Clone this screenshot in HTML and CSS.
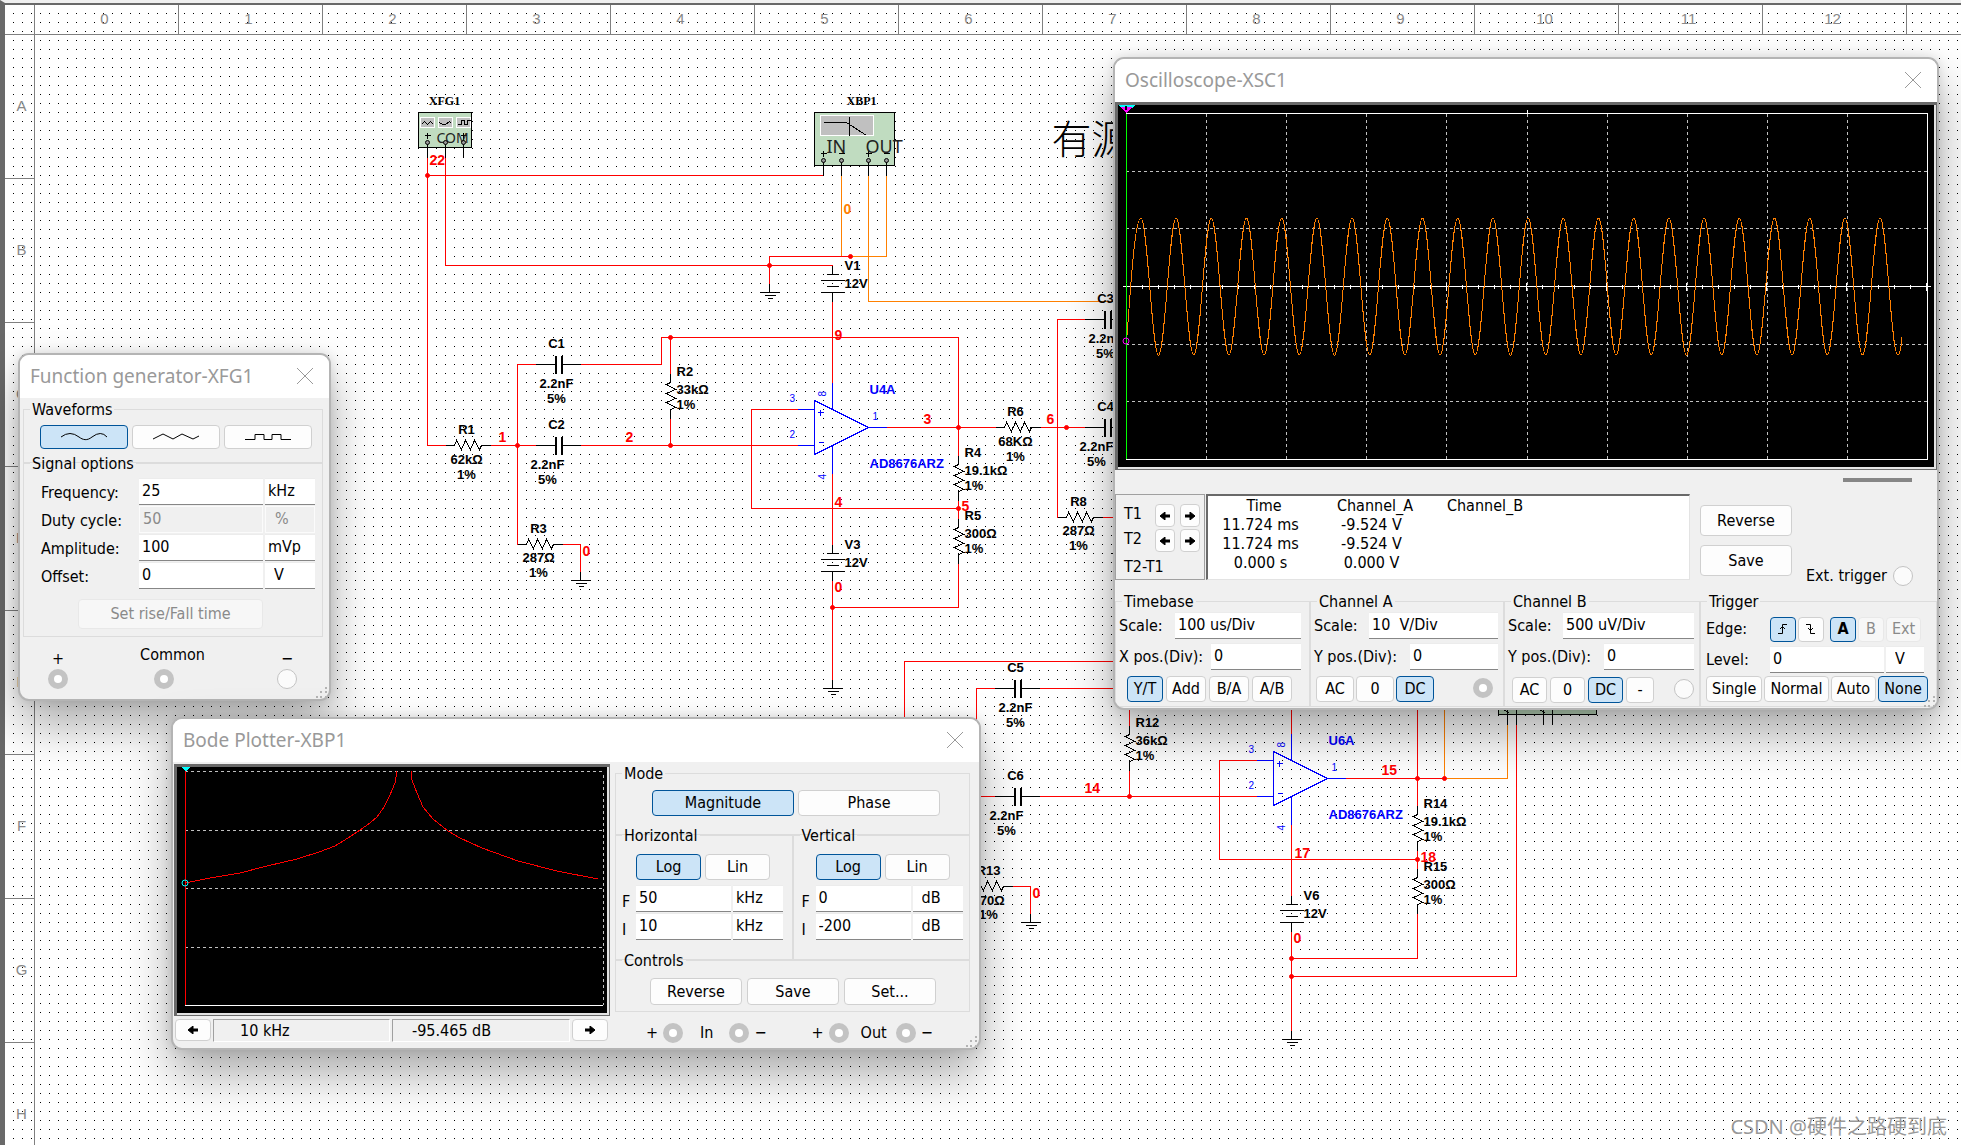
FILE: index.html
```html
<!DOCTYPE html>
<html lang="en">
<head>
<meta charset="utf-8">
<title>Schematic</title>
<link rel="stylesheet" href="styles.css">
</head>
<body>
<main class="desktop">
  <svg class="schematic" role="img" aria-label="Band-pass filter schematic">
    <defs>
      <pattern id="dots" x="4" y="4" width="9" height="9" patternUnits="userSpaceOnUse"><rect width="1" height="1" fill="#000"/></pattern>
      <path id="res-h" d="M0 0h9l2-5 5 9 4-9 5 9 4-9 5 9 2-4h9"/>
      <path id="res-v" d="M0 0v9l-4 2 9 5-9 4 9 5-9 4 9 5-5 2v9"/>
      <g id="cap"><path d="M0 0h19M26 0h19"/><path class="plate" d="M20-9v18M26-9v18"/></g>
      <path id="bat" d="M0 0v9M-6 9h12M-12 15h24M-6 21h12M-12 27h24M0 27v9"/>
      <path id="gnd" d="M0 0v9M-9 9h19M-5 12h11M-2 15h5"/>
      <g id="amp">
        <path d="M0-27V27L54 0zM-17-18H0M-17 18H0M54 0h18M18-45v27M18 18v28M3-15h6M6-18v6M4 15h5"/>
        <text x="-25" y="-26">3</text><text x="-25" y="10">2</text><text x="58" y="-8">1</text>
        <text transform="translate(11 -31) rotate(-90)">8</text><text transform="translate(11 52) rotate(-90)">4</text>
      </g>
      <circle id="dot" r="2"/>
      <circle id="pin" r="2"/>
    </defs>
    <rect width="100%" height="100%" fill="url(#dots)"/>

    <g transform="translate(.5 .5)">
      <g class="wire orange">
        <path d="M841 175V256M886 175V256H850M868 175V301H1130M1444 700V778H1507V724"/>
      </g>
      <g class="wire red">
        <path d="M427 157V445H445M427 175H823M445 157V265H832M850 256H769V283M832 301V382"/>
        <path d="M490 445H535M580 445H797M517 445V364H536M580 364H661V337H958V455M517 445V544M562 544H580V571M670 337V373M670 418V445"/>
        <path d="M797 409H751V508H958M958 500V518M832 473V544M832 580V679M958 563V607H832M886 427H995M1040 427H1084M1084 319H1057V517M1102 517H1130"/>
        <path d="M904 730V661H1130M994 688H976V796H994M1039 688H1130M1039 796H1256M1129 700V725M1129 770V796M1012 886H1030V913"/>
        <path d="M1291 700V733M1256 760H1219V859H1417M1345 778H1444M1417 700V805M1417 850V868M1417 913V958H1291M1516 724V976H1291M1291 823V895M1291 931V1030"/>
      </g>
      <g class="junction">
        <use href="#dot" x="427" y="175"/><use href="#dot" x="769" y="265"/><use href="#dot" x="850" y="256"/><use href="#dot" x="517" y="445"/>
        <use href="#dot" x="670" y="337"/><use href="#dot" x="670" y="445"/><use href="#dot" x="958" y="427"/><use href="#dot" x="958" y="508"/>
        <use href="#dot" x="832" y="607"/><use href="#dot" x="1066" y="427"/><use href="#dot" x="1129" y="796"/><use href="#dot" x="1417" y="778"/>
        <use href="#dot" x="1444" y="778"/><use href="#dot" x="1417" y="859"/><use href="#dot" x="1291" y="958"/><use href="#dot" x="1291" y="976"/>
      </g>
      <g class="part">
        <use href="#res-h" x="445" y="445"/><use href="#res-h" x="517" y="544"/><use href="#res-h" x="995" y="427"/><use href="#res-h" x="1057" y="517"/><use href="#res-h" x="967" y="886"/>
        <use href="#res-v" x="670" y="373"/><use href="#res-v" x="958" y="455"/><use href="#res-v" x="958" y="518"/><use href="#res-v" x="1129" y="725"/><use href="#res-v" x="1417" y="805"/><use href="#res-v" x="1417" y="868"/>
        <use href="#cap" x="535" y="364"/><use href="#cap" x="535" y="445"/><use href="#cap" x="1084" y="319"/><use href="#cap" x="1084" y="427"/><use href="#cap" x="994" y="688"/><use href="#cap" x="994" y="796"/>
        <use href="#bat" x="832" y="265"/><use href="#bat" x="832" y="544"/><use href="#bat" x="1291" y="895"/>
        <use href="#gnd" x="769" y="283"/><use href="#gnd" x="580" y="571"/><use href="#gnd" x="832" y="679"/><use href="#gnd" x="1030" y="913"/><use href="#gnd" x="1291" y="1030"/><use href="#gnd" x="1120" y="544"/>
      </g>
      <g class="amp"><use href="#amp" x="814" y="427"/><use href="#amp" x="1273" y="778"/></g>

      <g class="device">
        <rect class="case" x="418" y="112" width="53" height="35"/>
        <path class="screen" d="M420 117h14v10h-14zM438 117h14v10h-14zM456 117h14v10h-14z"/>
        <path d="M421 124l3-3 3 3 3-3 3 3M439 122l3 2 3 0 4-3 2 2M457 124h4v-4h3v4h3v-4h3M427 132v6M424 135h6M427 142V157M445 142V157M463 132V157M460 135h6"/>
        <text class="small-face" x="436" y="142">COM</text>
        <use href="#pin" x="427" y="142"/><use href="#pin" x="445" y="142"/><use href="#pin" x="463" y="142"/>
        <rect class="case" x="814" y="112" width="80" height="53"/>
        <path class="screen" d="M820 115h53v20h-53z"/>
        <path d="M823 122h23l20 13M849 116v19M820 153h6M823 150v6M838 153h6M865 153h6M868 150v6M883 153h6M823 160V175M841 160V175M868 160V175M886 160V175"/>
        <text class="big-face" x="826" y="152">IN</text><text class="big-face" x="865" y="152">OUT</text>
        <use href="#pin" x="823" y="160"/><use href="#pin" x="841" y="160"/><use href="#pin" x="868" y="160"/><use href="#pin" x="886" y="160"/>
        <rect class="case" x="1498" y="660" width="98" height="54"/>
        <path d="M1507 708V724M1516 708V724M1543 708V724M1552 708V724M1503 709l6 4M1539 709l6 4"/>
      </g>

      <g class="name"><text x="444" y="104">XFG1</text><text x="861" y="104">XBP1</text></g>
      <g class="label mid">
        <text x="556" y="347">C1</text><text x="556" y="387">2.2nF</text><text x="556" y="402">5%</text>
        <text x="556" y="428">C2</text><text x="547" y="468">2.2nF</text><text x="547" y="483">5%</text>
        <text x="466" y="433">R1</text><text x="466" y="463">62kΩ</text><text x="466" y="478">1%</text>
        <text x="538" y="532">R3</text><text x="538" y="561">287Ω</text><text x="538" y="576">1%</text>
        <text x="1015" y="415">R6</text><text x="1015" y="445">68KΩ</text><text x="1015" y="460">1%</text>
        <text x="1078" y="505">R8</text><text x="1078" y="534">287Ω</text><text x="1078" y="549">1%</text>
        <text x="1015" y="671">C5</text><text x="1015" y="711">2.2nF</text><text x="1015" y="726">5%</text>
        <text x="1015" y="779">C6</text><text x="1006" y="819">2.2nF</text><text x="1006" y="834">5%</text>
        <text x="988" y="874">R13</text><text x="988" y="904">270Ω</text><text x="988" y="918">1%</text>
        <text x="1105" y="302">C3</text><text x="1105" y="342">2.2nF</text><text x="1105" y="357">5%</text>
        <text x="1105" y="410">C4</text><text x="1096" y="450">2.2nF</text><text x="1096" y="465">5%</text>
      </g>
      <g class="label">
        <text x="844" y="269">V1</text><text x="844" y="287">12V</text><text x="844" y="548">V3</text><text x="844" y="566">12V</text><text x="1303" y="899">V6</text><text x="1303" y="917">12V</text>
        <text x="676" y="375">R2</text><text x="676" y="393">33kΩ</text><text x="676" y="408">1%</text>
        <text x="964" y="456">R4</text><text x="964" y="474">19.1kΩ</text><text x="964" y="489">1%</text>
        <text x="964" y="519">R5</text><text x="964" y="537">300Ω</text><text x="964" y="552">1%</text>
        <text x="1135" y="726">R12</text><text x="1135" y="744">36kΩ</text><text x="1135" y="759">1%</text>
        <text x="1423" y="807">R14</text><text x="1423" y="825">19.1kΩ</text><text x="1423" y="840">1%</text>
        <text x="1423" y="870">R15</text><text x="1423" y="888">300Ω</text><text x="1423" y="903">1%</text>
      </g>
      <g class="label blue"><text x="869" y="393">U4A</text><text x="869" y="467">AD8676ARZ</text><text x="1328" y="744">U6A</text><text x="1328" y="818">AD8676ARZ</text></g>
      <g class="net">
        <text x="429" y="164">22</text><text x="498" y="441">1</text><text x="625" y="441">2</text><text x="582" y="555">0</text><text x="834" y="339">9</text>
        <text x="923" y="423">3</text><text x="834" y="506">4</text><text x="961" y="510">5</text><text x="1046" y="423">6</text><text x="834" y="591">0</text>
        <text x="1084" y="792">14</text><text x="1381" y="774">15</text><text x="1294" y="857">17</text><text x="1420" y="861">18</text><text x="1293" y="942">0</text><text x="1032" y="897">0</text>
        <text class="orange-net" x="843" y="213">0</text>
      </g>
      <text class="heading" x="1051" y="153">有源</text>
    </g>
  </svg>

  <div class="frame">
    <div class="ruler-top"><span class="corner"></span><span>0</span><span>1</span><span>2</span><span>3</span><span>4</span><span>5</span><span>6</span><span>7</span><span>8</span><span>9</span><span>10</span><span>11</span><span>12</span><span></span></div>
    <div class="ruler-left"><span>A</span><span>B</span><span>C</span><span>D</span><span>E</span><span>F</span><span>G</span><span>H</span></div>
  </div>

  <p class="watermark">CSDN @硬件之路硬到底</p>

  <section class="window generator" aria-label="Function generator">
    <header class="titlebar"><h2>Function generator-XFG1</h2><button class="close" aria-label="Close"><svg width="16" height="16"><path d="M0 0L16 16M16 0L0 16"/></svg></button></header>
    <div class="generator-body">
      <fieldset>
        <legend>Waveforms</legend>
        <div class="waves">
          <button class="btn on" aria-label="Sine"><svg width="46" height="8"><path d="M0 4q9-7 18 0c4 3 8 4 13 0q9-7 15 0"/></svg></button>
          <button class="btn" aria-label="Triangle"><svg width="46" height="8"><path d="M0 6L10 1l10 5 9-5 11 5 6-3"/></svg></button>
          <button class="btn" aria-label="Square"><svg width="46" height="8"><path d="M0 6.500H10V1.500H19V6.500H27V1.500H36V6.500H46"/></svg></button>
        </div>
      </fieldset>
      <fieldset class="next">
        <legend>Signal options</legend>
        <div class="signal">
          <label for="fr">Frequency:</label><input id="fr" value="25"><input class="unit" aria-label="Frequency unit" value="kHz">
          <label for="du">Duty cycle:</label><input id="du" value="50" disabled><input class="unit mid-unit" aria-label="Duty cycle unit" value="%" disabled>
          <label for="am">Amplitude:</label><input id="am" value="100"><input class="unit" aria-label="Amplitude unit" value="mVp">
          <label for="of">Offset:</label><input id="of" value="0"><input class="unit mid-unit" aria-label="Offset unit" value="V">
        </div>
        <button class="btn rise" disabled>Set rise/Fall time</button>
      </fieldset>
      <div class="terminals">
        <div class="terminal"><span>+</span><i class="jack"></i></div>
        <div class="terminal common"><span>Common</span><i class="jack"></i></div>
        <div class="terminal"><span>−</span><i class="jack open"></i></div>
      </div>
    </div>
    <svg class="grip" width="11" height="11"><path d="M9 0h2v2h-2zM4 4h2v2h-2zM9 4h2v2h-2zM0 9h2v2h-2zM4 9h2v2h-2zM9 9h2v2h-2z"/></svg>
  </section>

  <section class="window bode" aria-label="Bode plotter">
    <header class="titlebar"><h2>Bode Plotter-XBP1</h2><button class="close" aria-label="Close"><svg width="16" height="16"><path d="M0 0L16 16M16 0L0 16"/></svg></button></header>
    <div class="bode-body">
      <div class="bode-left">
        <div class="screen-frame bode-screen">
          <svg>
            <g class="grid"><path d="M8 4.500H426M8 63.500H426M8 121.500H426M8 180.500H426M426.500 8V238"/></g>
            <path class="solid" d="M8 238.500H426"/>
            <path class="trace-red" d="M8.500 4V238"/>
            <path class="trace-red" d="M8 116L33 111 63 106 90 99 120 92 142 85 158 79 171 71 183 63 193 56 200 50 207 40 213 28 218 16 220 4M234 4L235 13 240 26 246 40 256 52 271 64 283 71 305 81 341 94 380 104 421 112"/>
            <path fill="#0ff" d="M4 0h9l-4 5z"/><circle cx="8" cy="116" r="3" stroke="#0ff"/>
          </svg>
        </div>
        <div class="status">
          <button class="btn" aria-label="Cursor left"><svg class="arrow" width="10" height="8"><path d="M0 4L5 0V3H10V5H5V8z"/></svg></button>
          <output class="freq">10 kHz</output><output class="gain">-95.465 dB</output>
          <button class="btn" aria-label="Cursor right"><svg class="arrow" width="10" height="8"><path d="M10 4L5 0V3H0V5H5V8z"/></svg></button>
        </div>
      </div>
      <div class="bode-right">
        <fieldset>
          <legend>Mode</legend>
          <div class="mode"><button class="btn on">Magnitude</button><button class="btn">Phase</button></div>
        </fieldset>
        <div class="axes next">
          <fieldset>
            <legend>Horizontal</legend>
            <div class="scale"><button class="btn on">Log</button><button class="btn">Lin</button></div>
            <div class="range">
              <label for="hf">F</label><input id="hf" value="50"><input class="unit" aria-label="Final frequency unit" value="kHz">
              <label for="hi">I</label><input id="hi" value="10"><input class="unit" aria-label="Initial frequency unit" value="kHz">
            </div>
          </fieldset>
          <fieldset class="vertical">
            <legend>Vertical</legend>
            <div class="scale"><button class="btn on">Log</button><button class="btn">Lin</button></div>
            <div class="range">
              <label for="vf">F</label><input id="vf" value="0"><input class="unit mid-unit" aria-label="Final level unit" value="dB">
              <label for="vi">I</label><input id="vi" value="-200"><input class="unit mid-unit" aria-label="Initial level unit" value="dB">
            </div>
          </fieldset>
        </div>
        <fieldset class="next">
          <legend>Controls</legend>
          <div class="controls"><button class="btn">Reverse</button><button class="btn">Save</button><button class="btn">Set...</button></div>
        </fieldset>
        <div class="ports">
          <div class="port"><span>+</span><i class="jack"></i><span class="port-name">In</span><i class="jack"></i><span>−</span></div>
          <div class="port"><span>+</span><i class="jack"></i><span class="port-name">Out</span><i class="jack"></i><span>−</span></div>
        </div>
      </div>
    </div>
    <svg class="grip" width="11" height="11"><path d="M9 0h2v2h-2zM4 4h2v2h-2zM9 4h2v2h-2zM0 9h2v2h-2zM4 9h2v2h-2zM9 9h2v2h-2z"/></svg>
  </section>

  <section class="window scope" aria-label="Oscilloscope">
    <header class="titlebar"><h2>Oscilloscope-XSC1</h2><button class="close" aria-label="Close"><svg width="16" height="16"><path d="M0 0L16 16M16 0L0 16"/></svg></button></header>
    <div class="screen-frame scope-screen">
      <svg>
        <g class="grid"><path d="M8 66.500H809M8 123.500H809M8 239.500H809M8 296.500H809M88.500 9V354M168.500 9V354M248.500 9V354M328.500 9V354M409.500 9V354M489.500 9V354M569.500 9V354M649.500 9V354M729.500 9V354"/></g>
        <path class="solid" d="M8 8.500H809.500V354.500H8M5 181.500H813M409.500 5V9"/>
        <path class="tick" d="M24 182H809"/>
        <path class="bigtick" d="M88 182H809"/>
        <path class="trace-orange" d="M8.500 237c4-50 8-124 14.400-124
          c6.400 0 11.200 137 17.600 137s11.200-137 17.600-137
          s11.200 137 17.600 137 11.200-137 17.600-137s11.200 137 17.600 137 11.200-137 17.600-137s11.200 137 17.600 137 11.200-137 17.600-137s11.200 137 17.600 137 11.200-137 17.600-137
          s11.200 137 17.600 137 11.200-137 17.600-137s11.200 137 17.600 137 11.200-137 17.600-137s11.200 137 17.600 137 11.200-137 17.600-137s11.200 137 17.600 137 11.200-137 17.600-137
          s11.200 137 17.600 137 11.200-137 17.600-137s11.200 137 17.600 137 11.200-137 17.600-137s11.200 137 17.600 137 11.200-137 17.600-137s11.200 137 17.600 137 11.200-137 17.600-137
          s11.200 137 17.600 137 11.200-137 17.600-137s11.200 137 17.600 137 11.200-137 17.600-137s11.200 137 17.600 137 11.200-137 17.600-137s11.200 137 17.600 137 11.200-137 17.600-137
          s11.200 137 17.600 137 11.200-137 17.600-137s11.200 137 17.600 137 11.200-137 17.600-137s11.200 137 17.600 137 11.200-137 17.600-137s11.200 137 17.600 137 11.200-137 17.600-137
          s11.200 137 17.600 137c2 0 4-9 4-18"/>
        <path stroke="#0f0" d="M8.500 9V354"/>
        <path fill="#0ff" d="M0 0h17l-3 3H3z"/><path fill="#f0f" d="M2 2h13L8 8z"/><path fill="#000" d="M7 1h2v4h-2z"/>
        <circle cx="8" cy="236" r="3" stroke="#f0f"/>
      </svg>
    </div>
    <div class="slider"><span></span></div>
    <div class="readout">
      <div class="cursors">
        <span>T1</span><button class="btn" aria-label="T1 left"><svg class="arrow" width="10" height="8"><path d="M0 4L5 0V3H10V5H5V8z"/></svg></button><button class="btn" aria-label="T1 right"><svg class="arrow" width="10" height="8"><path d="M10 4L5 0V3H0V5H5V8z"/></svg></button>
        <span>T2</span><button class="btn" aria-label="T2 left"><svg class="arrow" width="10" height="8"><path d="M0 4L5 0V3H10V5H5V8z"/></svg></button><button class="btn" aria-label="T2 right"><svg class="arrow" width="10" height="8"><path d="M10 4L5 0V3H0V5H5V8z"/></svg></button>
        <span class="delta">T2-T1</span>
      </div>
      <div class="values">
        <table>
          <tr><th>Time</th><th>Channel_A</th><th>Channel_B</th></tr>
          <tr><td>11.724 ms</td><td>-9.524 V</td><td></td></tr>
          <tr><td>11.724 ms</td><td>-9.524 V</td><td></td></tr>
          <tr><td>0.000 s</td><td>0.000 V</td><td></td></tr>
        </table>
      </div>
      <div class="actions"><button class="btn">Reverse</button><button class="btn">Save</button></div>
      <div class="ext"><span>Ext. trigger</span><i class="jack open"></i></div>
    </div>
    <div class="settings">
      <fieldset>
        <legend>Timebase</legend>
        <div class="line"><label for="ts">Scale:</label><input id="ts" value="100 us/Div"></div>
        <div class="line short"><label for="tx">X pos.(Div):</label><input id="tx" value="0"></div>
        <div class="modes base"><button class="btn on">Y/T</button><button class="btn">Add</button><button class="btn">B/A</button><button class="btn">A/B</button></div>
      </fieldset>
      <fieldset class="channel">
        <legend>Channel A</legend>
        <div class="line"><label for="as">Scale:</label><input id="as" value="10  V/Div"></div>
        <div class="line short"><label for="ay">Y pos.(Div):</label><input id="ay" value="0"></div>
        <div class="modes"><button class="btn">AC</button><button class="btn">0</button><button class="btn on">DC</button><i class="jack"></i></div>
      </fieldset>
      <fieldset class="channel">
        <legend>Channel B</legend>
        <div class="line"><label for="bs">Scale:</label><input id="bs" value="500 uV/Div"></div>
        <div class="line short"><label for="by">Y pos.(Div):</label><input id="by" value="0"></div>
        <div class="modes chan-b"><button class="btn">AC</button><button class="btn">0</button><button class="btn on">DC</button><button class="btn invert">-</button><i class="jack open"></i></div>
      </fieldset>
      <fieldset class="trigger">
        <legend>Trigger</legend>
        <div class="line edge"><span class="caption">Edge:</span>
          <button class="btn on" aria-label="Rising edge"><svg width="10" height="12"><path d="M0 10.500H4.500V1.500H9M2 6l2-2h1l2 2"/></svg></button>
          <button class="btn" aria-label="Falling edge"><svg width="10" height="12"><path d="M0 1.500H4.500V10.500H9M2 5l2 2h1l2-2"/></svg></button>
          <button class="btn on source">A</button><button class="btn" disabled>B</button><button class="btn ext-btn" disabled>Ext</button>
        </div>
        <div class="line level"><label for="lv">Level:</label><input id="lv" value="0"><input class="unit mid-unit" aria-label="Level unit" value="V"></div>
        <div class="modes sweep"><button class="btn">Single</button><button class="btn">Normal</button><button class="btn">Auto</button><button class="btn on">None</button></div>
      </fieldset>
    </div>
    <svg class="grip" width="11" height="11"><path d="M9 0h2v2h-2zM4 4h2v2h-2zM9 4h2v2h-2zM0 9h2v2h-2zM4 9h2v2h-2zM9 9h2v2h-2z"/></svg>
  </section>
</main>
</body>
</html>
```
FILE: styles.css
```css
* { box-sizing: border-box; }
body { margin: 0; background: #fff; color: #000; font: 16px/20px "DejaVu Sans Condensed", "Noto Sans", sans-serif; }
h2, p { margin: 0; font-weight: normal; }
button, input { font: inherit; color: inherit; margin: 0; }

.desktop { position: relative; height: 100vh; overflow: hidden; }

/* schematic sheet */
.schematic { position: absolute; inset: 0; width: 100%; height: 100%; }
.wire, .part, .amp { fill: none; shape-rendering: crispEdges; }
.red { stroke: #f00; }
.orange { stroke: #ff8000; }
.part { stroke: #000; }
.plate { stroke-width: 2; }
.junction { fill: #f00; }
.junction use { stroke: #f00; }
.amp { stroke: #00f; }
#amp text { font: 10px "Liberation Sans", sans-serif; fill: #00f; stroke: none; }
.device { stroke: #000; fill: none; shape-rendering: crispEdges; }
.device text { fill: #222; stroke: none; }
.device use { fill: #999; shape-rendering: auto; }
.case { fill: #c0dcc0; }
.screen { fill: #c0c0c0; stroke: #fff; }
.small-face { font: 14px "Noto Sans", sans-serif; }
.big-face { font: 18px "Noto Sans", sans-serif; }
.name { font: bold 12px "Liberation Serif", serif; text-anchor: middle; }
.label { font: bold 13px "Liberation Sans", sans-serif; }
.mid { text-anchor: middle; }
.blue { fill: #00f; }
.net { font: bold 14px "Liberation Sans", sans-serif; fill: #f00; }
.orange-net { fill: #ff8000; }
.heading { font: 40px "Liberation Serif", "Noto Sans CJK SC", serif; font-weight: 300; }

.frame { position: relative; height: 100%; border-left: 5px solid #696969; border-top: 3px solid #f0f0f0; font: 15px/20px "Liberation Sans", sans-serif; color: #888; }
.ruler-top { display: flex; height: 32px; border-top: 2px solid #696969; border-bottom: 1px solid #808080; overflow: hidden; }
.ruler-top span { flex: none; width: 144px; border-left: 1px solid #808080; text-align: center; padding: 4px 4px 0 0; }
.ruler-top .corner { width: 29px; border: 0; }
.ruler-left { width: 30px; height: calc(100% - 32px); border-right: 1px solid #808080; overflow: hidden; }
.ruler-left span { display: flex; height: 144px; align-items: center; justify-content: center; padding: 0 0 1px 4px; border-bottom: 1px solid #808080; }

.watermark { position: absolute; right: 14px; bottom: 6px; font: 20px/24px "Noto Sans", "Noto Sans CJK SC", sans-serif; color: #999; }

/* instrument windows */
.window { position: absolute; display: flex; flex-direction: column; border: 2px solid #b4b4b4; border-radius: 11px; background: #f0f0f0; box-shadow: 0 24px 48px rgba(0,0,0,.34), 0 0 12px rgba(0,0,0,.12); overflow: hidden; }
.titlebar { display: flex; align-items: center; justify-content: space-between; height: 43px; padding: 0 16px 2px 10px; background: #fff; }
.titlebar h2 { font: 19px/24px "Noto Sans", sans-serif; color: #999; }
.close { display: flex; padding: 0; border: 0; background: none; }
.close svg { stroke: #999; stroke-width: 1; }
.grip { position: absolute; right: 2px; bottom: 1px; fill: #b4b4b4; }

fieldset { min-width: 0; margin: 0; padding: 0; border: 1px solid #dcdcdc; }
legend { margin-left: 6px; padding: 2px 2px 0; line-height: 20px; }
.next { margin-top: -11px; }

.btn { display: flex; align-items: center; justify-content: center; flex: none; height: 26px; padding: 0; border: 1px solid #d0d0d0; border-radius: 4px; background: #fdfdfd; white-space: nowrap; }
.btn svg { fill: none; stroke: #000; }
.btn .arrow { fill: #000; stroke: #000; stroke-width: 1; }
.btn.on { background: #cce4f7; border-color: #005499; }
.btn:disabled { color: #8a8a8a; background: #f7f7f7; border-color: #e8e8e8; }
input { width: 100%; min-width: 0; height: 27px; padding: 0 3px 2px; border: 0; border-top: 1px solid #ececec; border-bottom: 1px solid #868686; border-radius: 0; background: #fff; }
input:disabled { color: #8a8a8a; background: #f0f0f0; border: 1px solid #fbfbfb; }
.mid-unit { padding-left: 9px; }

.jack { flex: none; width: 20px; height: 20px; border: 6px solid #c3c3c3; border-radius: 50%; background: #fff; }
.jack.open { border: 1px solid #c3c3c3; background: #fbfbfb; }

.screen-frame { padding: 0 2px 2px 0; border: 1px solid #696969; border-top-width: 3px; border-left-width: 3px; background: #e3e3e3; }
.screen-frame svg { display: block; width: 100%; height: 100%; background: #000; fill: none; shape-rendering: crispEdges; }
.screen-frame circle { shape-rendering: auto; }
.grid { stroke: #c0c0c0; stroke-dasharray: 3 3; }
.solid { stroke: #fff; }
.tick { stroke: #fff; stroke-width: 4; stroke-dasharray: 1 15; }
.bigtick { stroke: #fff; stroke-width: 8; stroke-dasharray: 1 79; }
.trace-red { stroke: #f00; }
.trace-orange { stroke: #ff8000; }

/* function generator */
.generator { left: 18px; top: 353px; width: 313px; }
.generator-body { padding: 0 6px 10px 3px; }
.waves { display: flex; gap: 4px; padding: 5px 0 13px 16px; }
.waves .btn { width: 88px; height: 24px; }
.signal { display: grid; grid-template-columns: 96px 124px 50px; column-gap: 2px; row-gap: 1px; align-items: center; padding: 4px 0 0 17px; }
.signal label { padding-top: 2px; }
.rise { width: 185px; height: 30px; margin: 10px auto 7px 54px; }
.terminals { display: flex; justify-content: space-between; padding: 9px 26px 0 25px; }
.terminal { display: flex; flex-direction: column; align-items: center; justify-content: flex-end; gap: 1px; }
.terminal span { line-height: 18px; }
.common { align-items: flex-start; gap: 5px; }
.common .jack { margin-left: 14px; }

/* bode plotter */
.bode { left: 171px; top: 717px; width: 810px; }
.bode-body { display: flex; gap: 5px; padding: 0 9px 5px 1px; }
.bode-left { flex: 1; min-width: 0; padding-top: 2px; }
.bode-screen { height: 252px; }
.status { display: flex; gap: 2px; padding: 3px 2px 0 1px; }
.status .btn { width: 36px; height: 22px; }
.status output { height: 23px; border: 1px solid #a0a0a0; border-right-color: #fff; border-bottom-color: #fff; line-height: 21px; }
.status .freq { width: 177px; padding-left: 26px; }
.status .gain { flex: 1; padding-left: 19px; }
.bode-right { width: 355px; }
.mode { display: flex; gap: 4px; padding: 6px 0 18px 36px; }
.mode .btn { width: 142px; }
.axes { display: grid; grid-template-columns: 1fr 1fr; }
.scale { display: flex; gap: 4px; padding: 8px 0 5px 20px; }
.scale .btn { width: 65px; }
.range { display: grid; grid-template-columns: 12px 95px 50px; column-gap: 2px; row-gap: 1px; align-items: end; padding: 0 0 19px 6px; }
.vertical .scale { padding-left: 22px; }
.vertical .range { padding-left: 8px; }
.controls { display: flex; gap: 5px; padding: 7px 0 6px 34px; }
.controls .btn { width: 92px; height: 27px; }
.ports { display: flex; gap: 45px; padding: 11px 0 0 31px; }
.port { display: flex; align-items: center; gap: 5px; }
.port-name { padding: 0 11px 0 12px; }
.port + .port .port-name { padding: 0 4px 0 7px; }

/* oscilloscope */
.scope { left: 1113px; top: 57px; width: 826px; }
.scope-screen { height: 368px; }
.slider { display: flex; justify-content: flex-end; height: 24px; padding: 8px 25px 0 0; }
.slider span { width: 69px; height: 4px; background: #868686; }
.readout { display: flex; height: 86px; }
.cursors { display: grid; grid-template-columns: 26px 20px 20px; column-gap: 5px; row-gap: 2px; align-content: start; width: 90px; padding: 9px 0 0 8px; border: 1px solid #a0a0a0; }
.cursors .btn { width: 20px; height: 23px; }
.cursors .delta { grid-column: 1 / -1; padding-top: 3px; }
.values { flex: 1; margin-left: 1px; border: 1px solid #e3e3e3; border-top: 2px solid #696969; border-left: 2px solid #696969; background: #fff; }
.values table { border-collapse: collapse; }
.values th, .values td { height: 19px; padding: 0; font-weight: normal; line-height: 19px; text-align: center; }
.values th { width: 110px; }
.values th:first-child { width: 112px; }
.values td { padding-right: 7px; }
.actions { display: flex; flex-direction: column; gap: 9px; padding: 11px 0 0 10px; }
.actions .btn { width: 92px; height: 31px; }
.ext { display: flex; align-items: center; align-self: flex-end; gap: 6px; margin-bottom: -6px; padding: 0 24px 0 14px; white-space: nowrap; }
.settings { display: grid; grid-template-columns: 195px 194px 196px 1fr; padding: 10px 0 1px; }
.settings legend { margin-left: 6px; }
.line { display: flex; align-items: center; gap: 2px; margin-bottom: 4px; padding: 0 8px 0 3px; white-space: nowrap; }
.line label { flex: none; width: 54px; }
.line.short label { width: 90px; }
.channel .line { padding-right: 5px; }
.channel .line label { width: 53px; }
.channel .short label { width: 94px; }
.modes { display: flex; gap: 2px; padding: 2px 8px 4px 5px; }
.modes .btn { width: 38px; }
.modes.base { gap: 3px; padding-left: 11px; }
.base .btn { width: 40px; }
.base .on { width: 36px; }
.modes .jack { margin: 2px 2px 0 auto; }
.modes.chan-b { gap: 3px; padding: 3px 3px 3px 7px; }
.chan-b .btn { width: 35px; }
.chan-b .invert { width: 28px; }
.trigger .line { padding: 0 12px 0 5px; }
.caption, .trigger .line label { flex: none; width: 62px; }
.trigger .edge { height: 30px; padding-top: 4px; }
.trigger .level { margin-bottom: 1px; }
.edge .btn { width: 26px; height: 25px; }
.edge .source { margin-left: 4px; font-weight: bold; }
.edge .ext-btn { width: 35px; }
.level .unit { flex: none; width: 38px; }
.modes.sweep { padding-right: 8px; }
.sweep .btn { flex: 1 1 auto; width: auto; }
```
